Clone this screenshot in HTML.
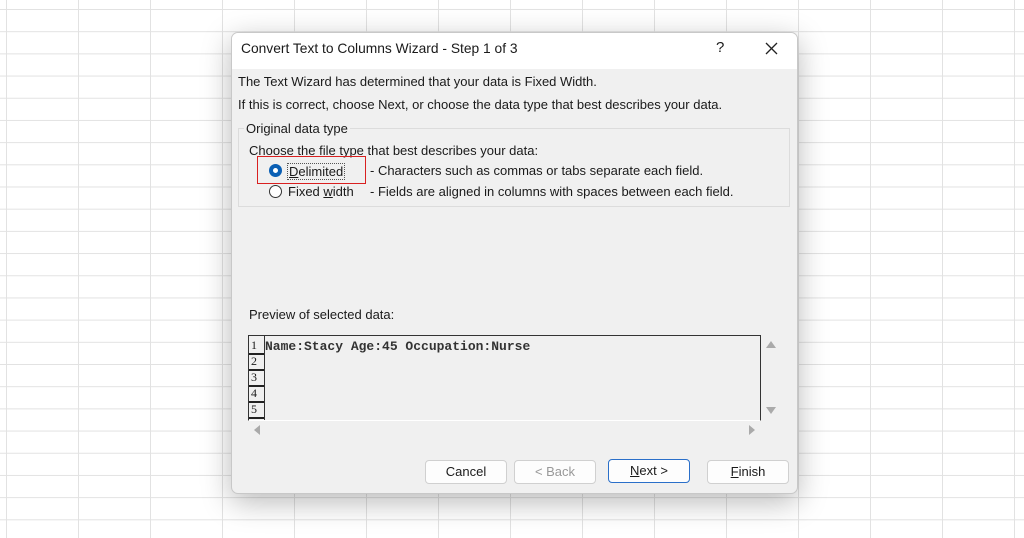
<!DOCTYPE html>
<html><head><style>
body{margin:0;width:1024px;height:538px;overflow:hidden;position:relative;background:#fff;
background-image:linear-gradient(90deg,#e2e2e2 1px,transparent 1px),linear-gradient(#e2e2e2 1px,transparent 1px);
background-size:72px 22.2px;background-position:6px 9px;font-family:"Liberation Sans",sans-serif;font-size:13px;color:#1a1a1a}
.a{position:absolute;white-space:nowrap}
#dlg{position:absolute;left:231px;top:32px;width:565px;height:460px;background:#f0f0f0;border:1px solid #c8c8c8;border-radius:7px;box-shadow:0 8px 30px rgba(0,0,0,.28);overflow:hidden}
#tb{position:absolute;left:0;top:0;width:565px;height:36px;background:#fff}
.btn{position:absolute;top:427px;height:22px;width:80px;background:#fdfdfd;border:1px solid #d0d0d0;border-radius:4px;text-align:center;line-height:22px}
.rad{position:absolute;width:11px;height:11px;border-radius:50%;border:1px solid #333;background:#fff}
.num{position:absolute;left:0;width:13px;height:15px;border-bottom:2px solid #222;font-family:"Liberation Serif",serif;font-size:12px;line-height:15px;padding-left:2px}
</style></head><body>
<div id="dlg">
<div id="tb"></div>
<div class="a" style="left:9px;top:8px;font-size:13.8px">Convert Text to Columns Wizard - Step 1 of 3</div>
<div class="a" style="left:484px;top:6px;font-size:15px">?</div>
<svg class="a" style="left:533px;top:9px" width="13" height="13"><path d="M1 1L12 12M12 1L1 12" stroke="#222" stroke-width="1.3"/></svg>
<div class="a" style="left:6px;top:41px">The Text Wizard has determined that your data is Fixed Width.</div>
<div class="a" style="left:6px;top:64px">If this is correct, choose Next, or choose the data type that best describes your data.</div>
<div class="a" style="left:6px;top:95px;width:550px;height:77px;border:1px solid #dcdcdc"></div>
<div class="a" style="left:12px;top:88px;background:#f0f0f0;padding:0 2px">Original data type</div>
<div class="a" style="left:17px;top:110px">Choose the file type that best describes your data:</div>
<div class="rad" style="left:37px;top:131px;border:4px solid #0a5fb4;width:5px;height:5px"></div>
<div class="a" style="left:55px;top:130px;border:1px dotted #555;padding:0 1px"><u>D</u>elimited</div>
<div class="a" style="left:25px;top:123px;width:107px;height:26px;border:1.5px solid #d92020"></div>
<div class="a" style="left:138px;top:130px">- Characters such as commas or tabs separate each field.</div>
<div class="rad" style="left:37px;top:152px"></div>
<div class="a" style="left:56px;top:151px">Fixed <u>w</u>idth</div>
<div class="a" style="left:138px;top:151px">- Fields are aligned in columns with spaces between each field.</div>
<div class="a" style="left:17px;top:274px">Preview of selected data:</div>
<div class="a" style="left:16px;top:302px;width:511px;height:84px;background:#f0f0f0;border:1px solid #333;border-bottom:1px solid #fff;overflow:hidden">
<div class="a" style="left:0;top:0;width:15px;height:84px;border-right:1.5px solid #333"></div>
<div class="num" style="top:2px">1</div><div class="num" style="top:18px">2</div><div class="num" style="top:34px">3</div><div class="num" style="top:50px">4</div><div class="num" style="top:66px">5</div>
<div class="a" style="left:16px;top:3px;font-family:'Liberation Mono',monospace;font-size:13px;font-weight:bold;color:#333">Name:Stacy Age:45 Occupation:Nurse</div>
</div>
<div class="a" style="left:534px;top:308px;width:0;height:0;border:5px solid transparent;border-bottom:7px solid #aaa;border-top:0"></div>
<div class="a" style="left:534px;top:374px;width:0;height:0;border:5px solid transparent;border-top:7px solid #aaa;border-bottom:0"></div>
<div class="a" style="left:22px;top:392px;width:0;height:0;border:5px solid transparent;border-right:6px solid #aaa;border-left:0"></div>
<div class="a" style="left:517px;top:392px;width:0;height:0;border:5px solid transparent;border-left:6px solid #aaa;border-right:0"></div>
<div class="btn" style="left:193px">Cancel</div>
<div class="btn" style="left:282px;color:#999">&lt; Back</div>
<div class="btn" style="left:376px;border:1.5px solid #2a6fc9;top:426px"><u>N</u>ext &gt;</div>
<div class="btn" style="left:475px"><u>F</u>inish</div>
</div>
</body></html>
